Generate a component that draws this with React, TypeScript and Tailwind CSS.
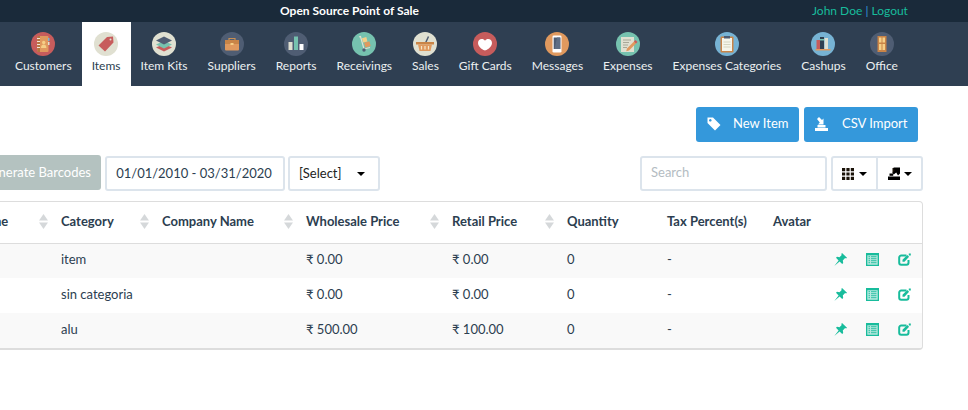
import React from "react";

const IconCircle = ({ bg, children }: { bg: string; children?: React.ReactNode }) => (
  <svg width="24" height="24" viewBox="0 0 24 24" className="block">
    <circle cx="12" cy="12" r="12" fill={bg} />
    {children}
  </svg>
);

const navIcons: Record<string, React.ReactNode> = {
  Customers: (
    <IconCircle bg="#c75c5c">
      <rect x="6.5" y="4" width="11" height="16" rx="1" fill="#e0995e" />
      <rect x="6.5" y="4" width="2.5" height="16" fill="#b5763f" />
      <rect x="17" y="6" width="1.5" height="3" fill="#77b3d4" />
      <rect x="17" y="10" width="1.5" height="3" fill="#e0e0d1" />
      <circle cx="12.7" cy="10.5" r="1.7" fill="#f5cf87" />
      <path d="M10 16c0-2.5 1.2-3.5 2.7-3.5s2.7 1 2.7 3.5z" fill="#f5cf87" />
      <path d="M6 6.5h3M6 9.5h3M6 12.5h3M6 15.5h3" stroke="#fff" strokeWidth="0.8" />
    </IconCircle>
  ),
  Items: (
    <IconCircle bg="#e0e0d1">
      <path d="M13 5l6-.5.5 6-8.5 9-6.5-6z" fill="#c75c5c" />
      <circle cx="16.5" cy="7.5" r="1" fill="#e0e0d1" />
    </IconCircle>
  ),
  "Item Kits": (
    <IconCircle bg="#e0e0d1">
      <path d="M12 12l8 3.5-8 4-8-4z" fill="#c75c5c" />
      <path d="M12 9l8 3.5-8 4-8-4z" fill="#76c2af" />
      <path d="M12 4.5l8 4-8 4-8-4z" fill="#4f5d73" />
    </IconCircle>
  ),
  Suppliers: (
    <IconCircle bg="#4f5d73">
      <path d="M9 8V6.5h6V8" fill="none" stroke="#c98f52" strokeWidth="1.2" />
      <rect x="5" y="8" width="14" height="10.5" rx="1" fill="#e0995e" />
      <rect x="5" y="8" width="14" height="4" fill="#c98447" />
      <rect x="10.5" y="11" width="3" height="2" fill="#f5cf87" />
    </IconCircle>
  ),
  Reports: (
    <IconCircle bg="#4f5d73">
      <rect x="4.5" y="10" width="4" height="8" fill="#e0e0d1" />
      <rect x="10" y="4.5" width="4" height="13.5" fill="#76c2af" />
      <rect x="15.5" y="12" width="4" height="6" fill="#fff" />
    </IconCircle>
  ),
  Receivings: (
    <IconCircle bg="#76c2af">
      <path d="M7 5l1.5-.5L12 17" fill="none" stroke="#e0e0d1" strokeWidth="1.2" />
      <path d="M12 17l6-1.5" stroke="#e0e0d1" strokeWidth="1.2" />
      <rect x="12.5" y="10" width="5.5" height="5" transform="rotate(-15 15 12)" fill="#e0995e" />
      <rect x="10.5" y="5.5" width="4.5" height="4.5" transform="rotate(-15 13 8)" fill="#f5cf87" />
      <circle cx="12" cy="18" r="1.7" fill="#4f5d73" />
    </IconCircle>
  ),
  Sales: (
    <IconCircle bg="#e0e0d1">
      <path d="M15.5 4.5L12.5 11" stroke="#4f5d73" strokeWidth="1.5" />
      <rect x="3" y="10" width="18" height="2.5" fill="#c98447" />
      <path d="M5 12.5h14l-1.5 6.5h-11z" fill="#e0995e" />
      <path d="M8.5 14v3.5M12 14v3.5M15.5 14v3.5" stroke="#f5e6c8" strokeWidth="1.2" />
    </IconCircle>
  ),
  "Gift Cards": (
    <IconCircle bg="#c75c5c">
      <path d="M12 18.5c-1 0-7-3-7-7.5 0-2.500 1.800-4 3.700-4 1.500 0 2.600.7 3.300 1.700.7-1 1.800-1.700 3.300-1.700 1.900 0 3.700 1.500 3.700 4 0 4.500-6 7.500-7 7.500z" fill="#fff" />
    </IconCircle>
  ),
  Messages: (
    <IconCircle bg="#e0995e">
      <rect x="7.500" y="3.500" width="9" height="17" rx="1.300" fill="#fff" />
      <rect x="8.700" y="5.500" width="6.600" height="11.500" fill="#4f5d73" />
      <path d="M12 5.500h3.300V17H9.500z" fill="#5f6e85" />
    </IconCircle>
  ),
  Expenses: (
    <IconCircle bg="#76c2af">
      <rect x="5" y="5" width="13" height="15" fill="#e0e0d1" />
      <path d="M7 8h8M7 10.500h6M7 13h5M7 15.500h4" stroke="#a8a898" strokeWidth="1" />
      <path d="M11 16.500l8-8 2 2-8 8-2.800.8z" fill="#e0995e" />
      <path d="M18 9.500l1.500-1.500 2 2-1.500 1.500z" fill="#c75c5c" />
    </IconCircle>
  ),
  "Expenses Categories": (
    <IconCircle bg="#77b3d4">
      <rect x="5.500" y="4.500" width="13" height="16" rx="1" fill="#c98447" />
      <rect x="7" y="6" width="10" height="13" fill="#f5f5ea" />
      <path d="M8.500 10h7M8.500 12.500h7M8.500 15h7" stroke="#d5d5c0" strokeWidth="1" />
      <rect x="9" y="4" width="6" height="2.500" fill="#4f5d73" />
    </IconCircle>
  ),
  Cashups: (
    <IconCircle bg="#77b3d4">
      <rect x="5.500" y="8" width="3.500" height="9" fill="#c75c5c" />
      <rect x="9" y="5" width="4" height="12" fill="#2f4050" />
      <rect x="9" y="7" width="4" height="1.500" fill="#76c2af" />
      <rect x="13.500" y="6" width="3.500" height="11" fill="#e0e0d1" />
      <rect x="4.500" y="17" width="15" height="1.500" fill="#e0995e" />
    </IconCircle>
  ),
  Office: (
    <IconCircle bg="#4f5d73">
      <rect x="7.500" y="4" width="9" height="16" fill="#c98447" />
      <rect x="9" y="5.500" width="2.500" height="5" fill="#f5cf87" />
      <rect x="12.500" y="5.500" width="2.500" height="5" fill="#f5cf87" />
      <rect x="9" y="12" width="2.500" height="6" fill="#f5cf87" />
      <rect x="12.500" y="12" width="2.500" height="6" fill="#f5cf87" />
    </IconCircle>
  ),
};

const navItems = [
  "Customers", "Items", "Item Kits", "Suppliers", "Reports", "Receivings", "Sales",
  "Gift Cards", "Messages", "Expenses", "Expenses Categories", "Cashups", "Office",
];

const SortArrows = () => (
  <svg width="9" height="15" viewBox="0 0 9 15" className="block shrink-0">
    <path d="M4.500 0L9 6.500H0z" fill="#d5d8da" />
    <path d="M4.500 15L0 8.500h9z" fill="#d5d8da" />
  </svg>
);

const Caret = () => (
  <span className="inline-block h-0 w-0 border-x-[4px] border-t-[4px] border-x-transparent border-t-black" />
);

const TagIcon = () => (
  <svg width="14" height="14" viewBox="0 0 14 14" className="block">
    <path d="M0.500 0.500h5.500l7.500 7.500-5.500 5.500-7.500-7.500zM3.300 2a1.300 1.300 0 1 0 .01 0z" fill="#fff" fillRule="evenodd" />
  </svg>
);

const ImportIcon = () => (
  <svg width="13" height="14" viewBox="0 0 13 14" className="block">
    <path d="M0 11h13v3H0zM2.500 8h8v2.500h-8z" fill="#fff" />
    <path d="M2 2l2-2 3 3L8.500 1.500V7.500H3l1.800-2z" fill="#fff" />
  </svg>
);

const ExportIcon = () => (
  <svg width="12" height="13" viewBox="0 0 12 13" className="block">
    <path d="M0 9.500h12V13H0z" fill="#000" />
    <path d="M1.500 8.800V6.500h3.700V8.800z" fill="#000" />
    <path d="M4.500 6V1h5.500l2 2L10 1.500 5.800 6z" fill="#1a1208" />
    <path d="M5.500 0.500H12V6.500L10 8.500 8.200 5.500 5.800 7.500 4.300 6 6.800 3.800z" fill="#000" />
  </svg>
);

const Pin = () => (
  <svg width="13" height="13" viewBox="0 0 13 13" className="block">
    <path d="M8 0l5 4.700-.9.7-1-.3-2.300 2.400.4 2.400-1 1L5.600 8.400 0.300 13 4.600 7.400 2 4.800l1-1 2.500.4L7.700 1.900l-.4-1z" fill="#18bc9c" />
  </svg>
);

const ListAlt = () => (
  <svg width="13" height="13" viewBox="0 0 13 13" className="block">
    <path d="M0 0h13v13H0z" fill="#18bc9c" opacity="0.3" />
    <path d="M0 0h13v13H0zM1.300 2.200v9.500h10.400V2.200z" fill="#18bc9c" fillRule="evenodd" />
    <path d="M2.500 3.700h1.500M5 3.700h5.500M2.500 5.700h1.500M5 5.700h5.500M2.500 7.700h1.500M5 7.700h5.500M2.500 9.700h1.500M5 9.700h5.500" stroke="#18bc9c" strokeWidth="1" opacity="0.85" />
  </svg>
);

const EditIcon = () => (
  <svg width="13" height="13" viewBox="0 0 13 13" className="block">
    <path d="M8.500 2.500H3.200A2 2 0 0 0 1.200 4.500v5.300a2 2 0 0 0 2 2h5.300a2 2 0 0 0 2-2V7" fill="none" stroke="#18bc9c" strokeWidth="2" />
    <path d="M4.500 8.800V6.800L9.300 2l1.800 1.800-4.600 5z" fill="#18bc9c" />
    <path d="M10.800 0.500h2v2h-2z" fill="#18bc9c" />
  </svg>
);

const rows = [
  { category: "item", wholesale: "₹ 0.00", retail: "₹ 0.00" },
  { category: "sin categoria", wholesale: "₹ 0.00", retail: "₹ 0.00" },
  { category: "alu", wholesale: "₹ 500.00", retail: "₹ 100.00" },
];

const headers: { label: string; sort: boolean; width: string }[] = [
  { label: "Name", sort: true, width: "w-[87px]" },
  { label: "Category", sort: true, width: "w-[101px]" },
  { label: "Company Name", sort: true, width: "w-[144px]" },
  { label: "Wholesale Price", sort: true, width: "w-[146px]" },
  { label: "Retail Price", sort: true, width: "w-[115px]" },
  { label: "Quantity", sort: false, width: "w-[100px]" },
  { label: "Tax Percent(s)", sort: false, width: "w-[106px]" },
  { label: "Avatar", sort: false, width: "w-[60px]" },
];

const cell = "px-[8px] pt-0 pb-[2px]";

export default function App() {
  return (
    <div className="h-[410px] w-[968px] overflow-hidden bg-white font-['Lato','Liberation_Sans',sans-serif] text-[13px] text-[#2c3e50]">
      <header className="flex h-[22px] items-center bg-[#1a2a3a] text-[12px]">
        <div className="w-[699px] pl-[280px] font-bold text-white">Open Source Point of Sale</div>
        <div className="ml-[113px] text-[#18bc9c]">
          John Doe <span className="text-[#3498db]">|</span> <span>Logout</span>
        </div>
      </header>

      <nav className="flex h-[64px] bg-[#2f3f52] pl-[5px]">
        {navItems.map((name) => {
          const active = name === "Items";
          return (
            <div
              key={name}
              className={`flex flex-col items-center px-[10px] pt-[10px] text-[12px] ${active ? "bg-white text-[#2c3e50]" : "text-[#ecf0f1]"}`}
            >
              {navIcons[name]}
              <span className="leading-[20px]">{name}</span>
            </div>
          );
        })}
      </nav>

      <main className="flex justify-end overflow-hidden pr-[45px]">
        <div className="w-[958px] shrink-0">
          <div className="flex justify-end gap-[5px] pr-[5px] pt-[21px]">
            <button className="flex h-[35px] w-[103px] items-center rounded-[3px] bg-[#3498db] pb-[2px] pl-[11px] text-white">
              <TagIcon />
              <span className="ml-[12px]">New Item</span>
            </button>
            <button className="flex h-[35px] w-[114px] items-center rounded-[3px] bg-[#3498db] pb-[2px] pl-[11px] text-white">
              <ImportIcon />
              <span className="ml-[14px]">CSV Import</span>
            </button>
          </div>

          <div className="mt-[13px] flex h-[36px] items-end">
            <button className="h-[35px] w-[136px] self-start rounded-[3px] bg-[#b4c2c0] pr-[10px] text-right text-white">
              Generate Barcodes
            </button>
            <div className="ml-[4px] flex h-[35px] w-[180px] items-center justify-center rounded-[3px] border-2 border-[#dce4ec] pr-[2px]">
              01/01/2010 - 03/31/2020
            </div>
            <div className="ml-[3px] flex h-[35px] w-[92px] items-center rounded-[3px] border-2 border-[#dce4ec] pl-[9px] text-[#222]">
              [Select]
              <span className="ml-[15px] flex"><Caret /></span>
            </div>
            <div className="ml-auto flex h-[35px] w-[187px] items-center rounded-[3px] border-2 border-[#dce4ec] pb-[2px] pl-[9px] text-[#b4bcc2]">
              Search
            </div>
            <div className="ml-[4px] flex h-[35px] w-[92px] rounded-[3px] border-2 border-[#dce4ec]">
              <div className="flex w-[45px] items-center justify-center gap-[5px] border-r-2 border-[#dce4ec] pr-[1px]">
                <svg width="12" height="12" viewBox="0 0 12 12" className="block">
                  <path d="M0 0h3.200v3.200H0zM4.400 0h3.200v3.200H4.400zM8.800 0H12v3.200H8.800zM0 4.400h3.200v3.200H0zM4.400 4.400h3.200v3.200H4.400zM8.800 4.400H12v3.200H8.800zM0 8.800h3.200V12H0zM4.400 8.800h3.200V12H4.400zM8.800 8.800H12V12H8.800z" fill="#1a1208" />
                </svg>
                <Caret />
              </div>
              <div className="flex flex-1 items-center justify-center gap-[4px]">
                <ExportIcon />
                <Caret />
              </div>
            </div>
          </div>

          <div className="mt-[10px] overflow-hidden rounded-[4px] border border-b-2 border-[#dddddd]">
            <table className="w-full table-fixed border-collapse">
              <thead>
                <tr className="h-[41px] border-b border-[#dddddd]">
                  {headers.map((h) => (
                    <th key={h.label} className={`${h.width} p-0 text-left font-bold`}>
                      <div className="flex items-center justify-between pb-[1px] pl-[8px] pr-[5px]">
                        <span className="whitespace-nowrap">{h.label}</span>
                        {h.sort && <SortArrows />}
                      </div>
                    </th>
                  ))}
                  <th className="p-0" />
                </tr>
              </thead>
              <tbody>
                {rows.map((r, i) => (
                  <tr key={r.category} className={`h-[35px] ${i % 2 === 0 ? "bg-[#f9f9f9]" : "bg-white"}`}>
                    <td className="p-0" />
                    <td className={cell}>{r.category}</td>
                    <td className="p-0" />
                    <td className={cell}>{r.wholesale}</td>
                    <td className={cell}>{r.retail}</td>
                    <td className={cell}>0</td>
                    <td className={cell}>-</td>
                    <td className="p-0" />
                    <td className="p-0">
                      <div className="flex items-center justify-end gap-[19px] pb-[3px] pr-[11px]">
                        <Pin />
                        <ListAlt />
                        <EditIcon />
                      </div>
                    </td>
                  </tr>
                ))}
              </tbody>
            </table>
          </div>
        </div>
      </main>
    </div>
  );
}
